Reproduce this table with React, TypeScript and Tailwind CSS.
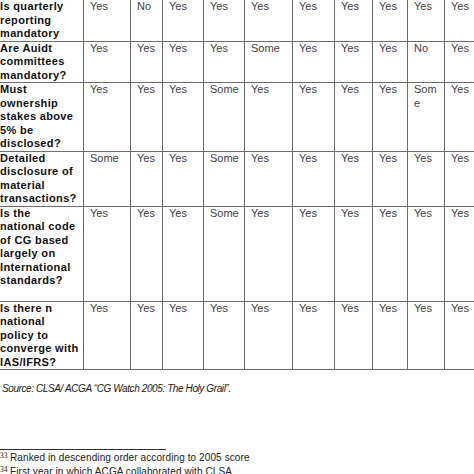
import React from 'react';

type Row = {
    label: string[];
    cells: React.ReactNode[];
    height: string;
};

const ROWS: Row[] = [
    {
        label: ['Is quarterly', 'reporting', 'mandatory'],
        cells: ['Yes', 'No', 'Yes', 'Yes', 'Yes', 'Yes', 'Yes', 'Yes', 'Yes', 'Yes'],
        height: 'h-[41px]',
    },
    {
        label: ['Are Auidt', 'committees', 'mandatory?'],
        cells: ['Yes', 'Yes', 'Yes', 'Yes', 'Some', 'Yes', 'Yes', 'Yes', 'No', 'Yes'],
        height: 'h-[41px]',
    },
    {
        label: ['Must', 'ownership', 'stakes above', '5% be', 'disclosed?'],
        cells: ['Yes', 'Yes', 'Yes', 'Some', 'Yes', 'Yes', 'Yes', 'Yes', <>Som<br />e</>, 'Yes'],
        height: 'h-[67px]',
    },
    {
        label: ['Detailed', 'disclosure of', 'material', 'transactions?'],
        cells: ['Some', 'Yes', 'Yes', 'Some', 'Yes', 'Yes', 'Yes', 'Yes', 'Yes', 'Yes'],
        height: 'h-[54px]',
    },
    {
        label: ['Is the', 'national code', 'of CG based', 'largely on', 'International', 'standards?'],
        cells: ['Yes', 'Yes', 'Yes', 'Some', 'Yes', 'Yes', 'Yes', 'Yes', 'Yes', 'Yes'],
        height: 'h-[95px]',
    },
    {
        label: ['Is there n', 'national', 'policy to', 'converge with', 'IAS/IFRS?'],
        cells: ['Yes', 'Yes', 'Yes', 'Yes', 'Yes', 'Yes', 'Yes', 'Yes', 'Yes', 'Yes'],
        height: 'h-[67px]',
    },
];

// column widths, measured between the grid lines
const COL_WIDTHS = ['w-[86px]', 'w-[47px]', 'w-[32px]', 'w-[41px]', 'w-[41px]', 'w-[48px]', 'w-[42px]', 'w-[38px]', 'w-[35px]', 'w-[37px]', 'w-[50px]'];

export default function App() {
    return (
        <div className="w-[474px] h-[474px] overflow-hidden bg-white font-['Liberation_Sans',Arial,sans-serif]">
            <table className="-ml-[3px] -mt-[1px] border-collapse table-fixed w-[497px] text-[11px] leading-[13.5px]">
                <colgroup>
                    {COL_WIDTHS.map((w, i) => (
                        <col key={i} className={w} />
                    ))}
                </colgroup>
                <tbody>
                    {ROWS.map((row, r) => (
                        <tr key={r} className={row.height}>
                            <td className="align-top border border-[#6e6e6e] pl-[2px] p-0 font-bold tracking-[0.35px] text-[#111]">
                                {row.label.map((line, i) => (
                                    <div key={i}>{line}</div>
                                ))}
                            </td>
                            {row.cells.map((cell, c) => (
                                <td key={c} className="align-top border border-[#6e6e6e] p-0 pl-[6px] text-[#444]">
                                    {cell}
                                </td>
                            ))}
                        </tr>
                    ))}
                </tbody>
            </table>

            <p className="mt-[11px] ml-[2px] text-[10px] italic text-[#222] tracking-[-0.4px]">
                Source: CLSA/ ACGA “CG Watch 2005: The Holy Grail”.
            </p>

            <div className="mt-[53px] w-[166px] h-px bg-[#333]" />

            <div className="text-[10px] leading-[14px] text-[#222] mt-[1px]">
                <div className="flex items-start">
                    <span className="text-[7.5px] leading-[10px] font-['Liberation_Serif',serif] w-[10px]">33</span>
                    <span className="tracking-[0.1px]">Ranked in descending order according to 2005 score</span>
                </div>
                <div className="flex items-start">
                    <span className="text-[7.5px] leading-[10px] font-['Liberation_Serif',serif] w-[10px]">34</span>
                    <span className="tracking-[0.1px]">First year in which ACGA collaborated with CLSA</span>
                </div>
            </div>
        </div>
    );
}
